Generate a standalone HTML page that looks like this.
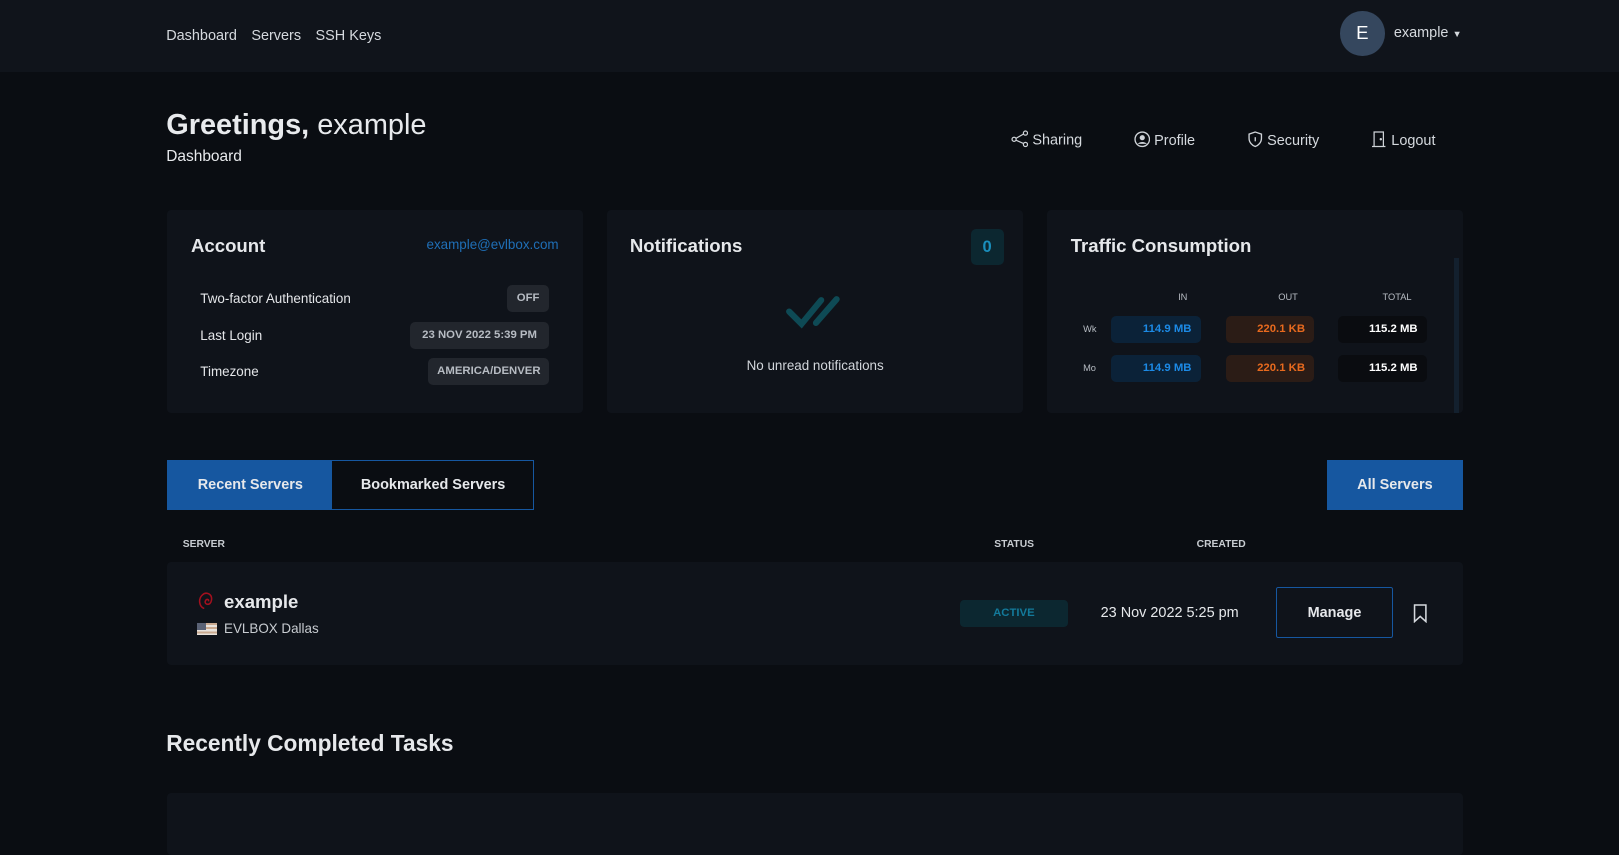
<!DOCTYPE html>
<html><head><meta charset="utf-8"><style>
html{zoom:1.0325}
*{box-sizing:border-box;margin:0;padding:0}
body{width:1568px;height:816px;overflow:hidden;background:#0a0d12;font-family:"Liberation Sans",sans-serif;color:#e6e8eb;position:relative}
.abs{position:absolute}
.nav{left:0;top:0;width:1568px;height:70px;background:#10141b}
.nav a{color:#d5d9de;font-size:14px;text-decoration:none}
.card{background:#0f131a;border-radius:4px}
.pill{position:absolute;background:#22262d;color:#b7bcc3;font-size:11px;font-weight:bold;border-radius:5px;height:26px;line-height:26px;text-align:center}
.tv{position:absolute;height:26px;line-height:26px;border-radius:5px;font-size:11px;font-weight:bold;text-align:right;padding-right:9px}
.lbl{font-size:14px;color:#e4e6e9}
.th{font-size:10px;font-weight:bold;color:#c8ccd1}
</style></head><body>
<div class="abs nav">
<div class="abs" style="left:161px;top:24px"><a>Dashboard</a><a style="margin-left:14px">Servers</a><a style="margin-left:14px">SSH Keys</a></div>
<div class="abs" style="left:1298px;top:11px;width:43px;height:43px;border-radius:50%;background:#35475e;color:#fff;font-size:18px;text-align:center;line-height:43px">E</div>
<div class="abs" style="left:1350px;top:24px;font-size:14px;color:#d5d9de">example <span style="font-size:9px">▼</span></div>
</div>
<div class="abs" style="left:161px;top:106px;font-size:28px;color:#e8eaed"><b>Greetings,</b> example</div>
<div class="abs" style="left:161px;top:143px;font-size:15px;color:#e8eaed">Dashboard</div>
<div class="abs" style="left:979px;top:126px;font-size:14px;color:#d5d9de;white-space:nowrap">
<svg width="17" height="17" viewBox="0 0 17 17" style="vertical-align:-3px" fill="none" stroke="#cfd3d8" stroke-width="1.2"><circle cx="3" cy="9" r="2"/><circle cx="14" cy="3" r="2"/><circle cx="14" cy="14" r="2"/><path d="M5 8 12 4M5 10l7 3"/></svg> Sharing
<span style="margin-left:46px"><svg width="16" height="16" viewBox="0 0 16 16" style="vertical-align:-3px"><circle cx="8" cy="8" r="7" fill="none" stroke="#cfd3d8" stroke-width="1.3"/><circle cx="8" cy="6.5" r="2.5" fill="#cfd3d8"/><path d="M3.5 12.5c2-2.5 7-2.5 9 0" fill="#cfd3d8"/></svg> Profile</span>
<span style="margin-left:46px"><svg width="16" height="16" viewBox="0 0 16 16" style="vertical-align:-3px" fill="none" stroke="#cfd3d8" stroke-width="1.3"><path d="M8 1 2 3v4c0 4 3 7 6 8 3-1 6-4 6-8V3z"/><path d="M8 6v4"/></svg> Security</span>
<span style="margin-left:46px"><svg width="16" height="16" viewBox="0 0 16 16" style="vertical-align:-3px" fill="none" stroke="#cfd3d8" stroke-width="1.2"><path d="M3 15V1h9v14M1 15h13"/><circle cx="9.5" cy="8" r=".6" fill="#cfd3d8"/></svg> Logout</span>
</div>

<div class="abs card" style="left:162px;top:203px;width:403px;height:197px">
<div class="abs" style="left:23px;top:25px;font-size:18px;font-weight:bold">Account</div>
<div class="abs" style="right:24px;top:27px;font-size:13px;color:#1f6fb7">example@evlbox.com</div>
<div class="abs lbl" style="left:32px;top:79px;font-size:13px">Two-factor Authentication</div>
<div class="abs lbl" style="left:32px;top:115px;font-size:13px">Last Login</div>
<div class="abs lbl" style="left:32px;top:150px;font-size:13px">Timezone</div>
<div class="pill" style="left:329px;top:73px;width:41px">OFF</div>
<div class="pill" style="left:235px;top:109px;width:135px">23 NOV 2022 5:39 PM</div>
<div class="pill" style="left:253px;top:144px;width:117px">AMERICA/DENVER</div>
</div>
<div class="abs card" style="left:588px;top:203px;width:403px;height:197px">
<div class="abs" style="left:22px;top:25px;font-size:18px;font-weight:bold">Notifications</div>
<div class="abs" style="left:352px;top:19px;width:32px;height:35px;border-radius:5px;background:#0c2730;color:#1a8fbd;font-weight:bold;font-size:16px;text-align:center;line-height:35px">0</div>
<svg class="abs" style="left:171px;top:82px" width="62" height="36" viewBox="0 0 62 36" fill="none" stroke="#0e4a55" stroke-width="6" stroke-linecap="round"><path d="M5 17l12 12L36 6M31 28 51 5"/></svg>
<div class="abs" style="left:0;width:403px;top:144px;text-align:center;font-size:13px;color:#d2d6db">No unread notifications</div>
</div>
<div class="abs card" style="left:1014px;top:203px;width:403px;height:197px">
<div class="abs" style="left:23px;top:25px;font-size:18px;font-weight:bold">Traffic Consumption</div>
<div class="abs" style="left:394px;top:47px;width:5px;height:150px;background:#13202e"></div>
<div class="abs" style="left:127px;top:80px;font-size:9px;color:#b7bcc3">IN</div>
<div class="abs" style="left:224px;top:80px;font-size:9px;color:#b7bcc3">OUT</div>
<div class="abs" style="left:325px;top:80px;font-size:9px;color:#b7bcc3">TOTAL</div>
<div class="abs" style="left:35px;top:111px;font-size:9px;color:#b7bcc3">Wk</div>
<div class="abs" style="left:35px;top:149px;font-size:9px;color:#b7bcc3">Mo</div>
<div class="tv" style="left:62px;top:103px;width:87px;background:#0b2238;color:#1c8ae6">114.9 MB</div>
<div class="tv" style="left:173px;top:103px;width:86px;background:#2b1c16;color:#e86a1e">220.1 KB</div>
<div class="tv" style="left:282px;top:103px;width:86px;background:#0a0c10;color:#fff">115.2 MB</div>
<div class="tv" style="left:62px;top:141px;width:87px;background:#0b2238;color:#1c8ae6">114.9 MB</div>
<div class="tv" style="left:173px;top:141px;width:86px;background:#2b1c16;color:#e86a1e">220.1 KB</div>
<div class="tv" style="left:282px;top:141px;width:86px;background:#0a0c10;color:#fff">115.2 MB</div>
</div>

<div class="abs" style="left:162px;top:446px;width:355px;height:48px;border:1px solid #1657a0;font-size:14px;font-weight:bold">
<div class="abs" style="left:0;top:0;width:159px;height:46px;background:#1657a0;text-align:center;line-height:48px">Recent Servers</div>
<div class="abs" style="left:159px;top:0;width:195px;height:46px;text-align:center;line-height:48px">Bookmarked Servers</div>
</div>
<div class="abs" style="left:1285px;top:446px;width:132px;height:48px;background:#1657a0;font-size:14px;font-weight:bold;text-align:center;line-height:50px">All Servers</div>
<div class="abs th" style="left:177px;top:522px">SERVER</div>
<div class="abs th" style="left:963px;top:522px">STATUS</div>
<div class="abs th" style="left:1159px;top:522px">CREATED</div>
<div class="abs card" style="left:162px;top:544px;width:1255px;height:100px">
<svg class="abs" style="left:29px;top:28px" width="16" height="18" viewBox="0 0 16 18" fill="none" stroke="#a3101e" stroke-width="1.5"><path d="M7 17C2 15 1 8 5 4s10-1 9 5-7 4-6 1 4-2 3 0"/></svg>
<div class="abs" style="left:55px;top:28px;font-size:18px;font-weight:bold">example</div>
<div class="abs" style="left:29px;top:59px;width:19px;height:12px;background:repeating-linear-gradient(#c9a98f 0 2px,#e8e2dc 2px 4px)"><div style="width:9px;height:7px;background:#5a6275"></div></div>
<div class="abs" style="left:55px;top:57px;font-size:13px;color:#c8ccd1">EVLBOX Dallas</div>
<div class="abs" style="left:768px;top:37px;width:104px;height:26px;border-radius:4px;background:#0c2730;color:#137a9b;font-size:11px;font-weight:bold;text-align:center;line-height:26px">ACTIVE</div>
<div class="abs" style="left:904px;top:42px;font-size:14px">23 Nov 2022 5:25 pm</div>
<div class="abs" style="left:1074px;top:25px;width:113px;height:49px;border:1px solid #1657a0;border-radius:2px;font-size:14px;font-weight:bold;text-align:center;line-height:49px">Manage</div>
<svg class="abs" style="left:1207px;top:41px" width="14" height="18" viewBox="0 0 14 18" fill="none" stroke="#d5d9de" stroke-width="1.5"><path d="M1.5 1h11v16L7 12l-5.5 5z"/></svg>
</div>
<div class="abs" style="left:161px;top:707px;font-size:22px;font-weight:bold">Recently Completed Tasks</div>
<div class="abs card" style="left:162px;top:768px;width:1255px;height:60px"></div>
</body></html>
